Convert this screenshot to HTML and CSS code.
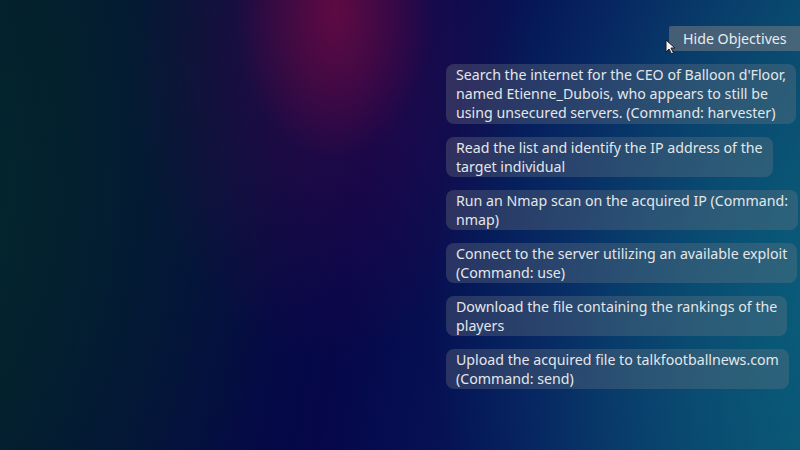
FILE: index.html
```html
<!DOCTYPE html>
<html lang="en">
<head>
    <meta charset="UTF-8">
    <meta name="viewport" content="width=device-width, initial-scale=1.0">
    <title>Objectives</title>
    <link rel="stylesheet" href="styles.css">
</head>
<body>

    <div class="objectives">
        <!-- Toggle button -->
        <div class="toggle-row">
            <button class="toggle-btn">Hide Objectives</button>
            <svg class="cursor" width="11" height="16" viewBox="0 0 11 16">
                <path d="M1 1 L1 13 L4 10 L6.5 15 L8.5 14 L6 9 L10 9 Z" fill="#f2f2f2" stroke="#1a1a1a" stroke-width="1"/>
            </svg>
        </div>

        <!-- Objective list (lines broken as the game wraps them) -->
        <ul class="objective-list">
            <li class="objective">Search the internet for the CEO of Balloon d'Floor,<br>named Etienne_Dubois, who appears to still be<br>using unsecured servers. (Command: harvester)</li>
            <li class="objective">Read the list and identify the IP address of the<br>target individual</li>
            <li class="objective">Run an Nmap scan on the acquired IP (Command:<br>nmap)</li>
            <li class="objective">Connect to the server utilizing an available exploit<br>(Command: use)</li>
            <li class="objective">Download the file containing the rankings of the<br>players</li>
            <li class="objective">Upload the acquired file to talkfootballnews.com<br>(Command: send)</li>
        </ul>
    </div>

</body>
</html>
```

FILE: styles.css
```css
html, body {
    margin: 0;
    width: 800px;
    height: 450px;
    overflow: hidden;
}
body {
    font-family: "Noto Sans", "Open Sans", sans-serif;
    font-size: 14.2px;
    color: #e3e7ea;
    background-color: #04093f;
    background-image:
        radial-gradient(ellipse 100px 150px at 335px 10px, rgba(115, 10, 65, 0.75), rgba(115, 10, 65, 0) 100%),
        radial-gradient(ellipse 200px 300px at 330px 60px, rgba(70, 8, 70, 0.55), rgba(70, 8, 70, 0) 100%),
        radial-gradient(ellipse 420px 520px at 850px 300px, rgba(10, 95, 125, 0.9), rgba(10, 95, 125, 0) 100%),
        radial-gradient(ellipse 340px 520px at -60px 200px, rgba(3, 38, 45, 1), rgba(3, 38, 45, 0) 100%),
        linear-gradient(100deg, #041c2a 0%, #05074a 45%, #061a5c 70%, #0a4a6a 100%);
}
.objectives {
    margin-left: 446px;
    padding-top: 26px;
    width: 400px;
}
.toggle-row {
    position: relative;
    margin-left: 223px;
}
.toggle-btn {
    display: block;
    font-family: inherit;
    font-size: 14.2px;
    line-height: 19px;
    color: #e8ecee;
    background-color: rgba(110, 118, 126, 0.6);
    border: none;
    border-radius: 2px;
    padding: 3px 15px 3px 14px;
    margin: 0;
}
.cursor {
    position: absolute;
    left: -4px;
    top: 13px;
}
.objective-list {
    list-style: none;
    margin: 13px 0 0 0;
    padding: 0;
    display: flex;
    flex-direction: column;
    align-items: flex-start;
    gap: 13px;
}
.objective {
    white-space: nowrap;
    padding: 1px 10px;
    line-height: 19px;
    border-radius: 8px;
    background-color: rgba(112, 122, 130, 0.33);
}
.objective:first-child {
    padding-bottom: 2px;
}
```
